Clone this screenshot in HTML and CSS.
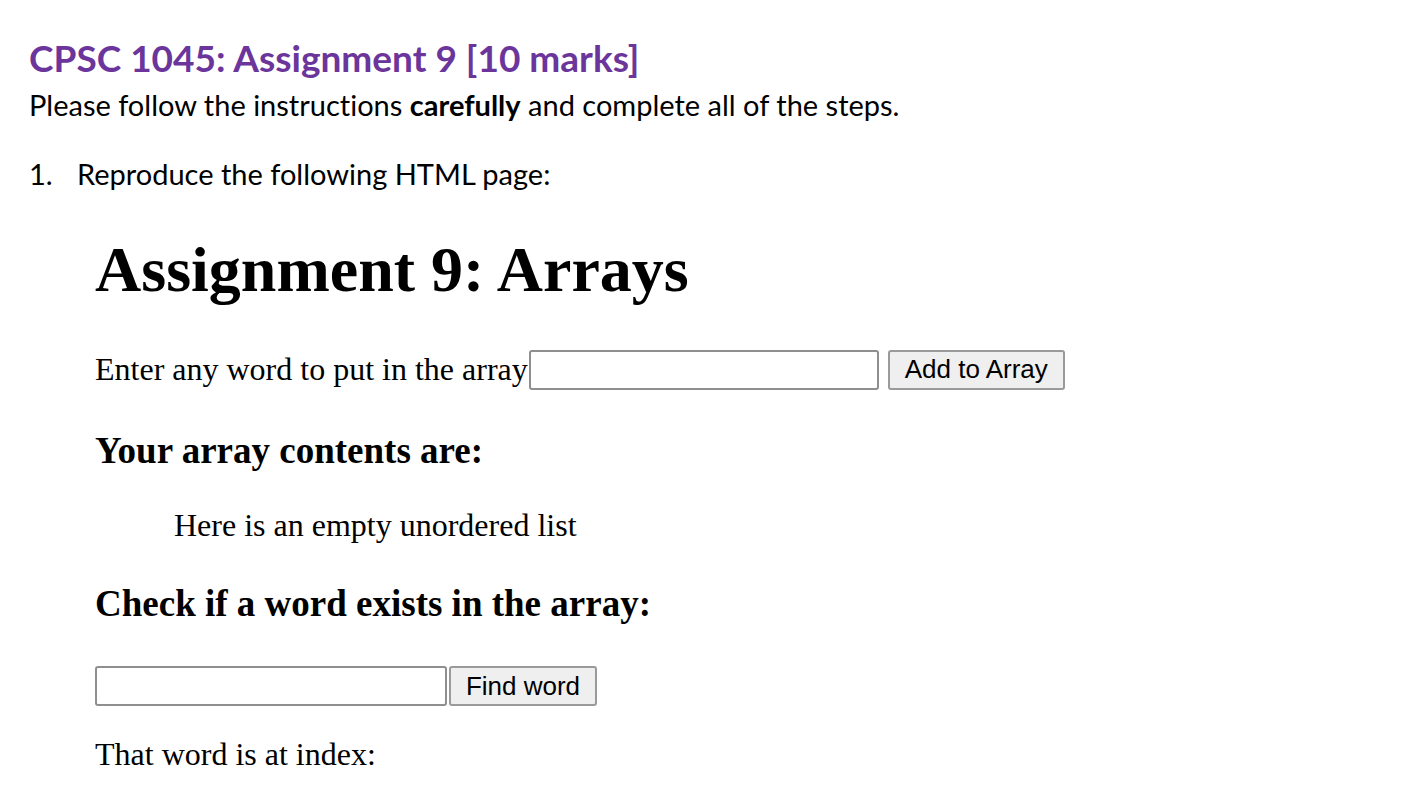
FILE: index.html
```html
<!DOCTYPE html>
<html lang="en">
<head>
    <meta charset="UTF-8">
    <title>CPSC 1045: Assignment 9</title>
    <link rel="stylesheet" href="styles.css">
</head>
<body>
    <div class="page">
        <h1 class="title">CPSC 1045: Assignment 9 [10 marks]</h1>
        <p class="intro">Please follow the instructions <strong>carefully</strong> and complete all of the steps.</p>

        <ol class="steps">
            <li>
                <span class="num">1.</span>
                <span>Reproduce the following HTML page:</span>
            </li>
        </ol>

        <div class="sample">
            <h1 class="sample-title">Assignment 9: Arrays</h1>

            <div class="row row-add">
                <span>Enter any word to put in the array</span><input type="text" class="field"><button class="btn btn-add">Add to Array</button>
            </div>

            <h3 class="sample-head">Your array contents are:</h3>
            <p class="empty-list">Here is an empty unordered list</p>

            <h3 class="sample-head head-find">Check if a word exists in the array:</h3>

            <div class="row row-find">
                <input type="text" class="field"><button class="btn btn-find">Find word</button>
            </div>

            <p class="result">That word is at index:</p>
        </div>
    </div>
</body>
</html>
```

FILE: styles.css
```css
body {
    margin: 0;
    background: #ffffff;
    color: #000000;
    font-family: Lato, "Open Sans", sans-serif;
    font-variant-ligatures: none;
}

.page {
    padding: 36px 29px 0 29px;
}

.title {
    margin: 0;
    font-size: 37px;
    line-height: 1.2;
    font-weight: 700;
    color: #6b359c;
}

.intro {
    margin: 8px 0 0 0;
    font-size: 29px;
    line-height: 1.2;
}

.steps {
    list-style: none;
    margin: 34px 0 0 0;
    padding: 0;
    font-size: 29px;
    line-height: 1.2;
}

.steps li {
    display: flex;
}

.num {
    width: 48px;
}

/* embedded screenshot of the target page */
.sample {
    margin: 41px 0 0 66px;
    font-family: "Liberation Serif", "Times New Roman", serif;
    font-size: 32px;
    line-height: 1.15;
}

.sample-title {
    margin: 0;
    font-size: 64px;
    line-height: 1.15;
    font-weight: 700;
}

.row {
    display: flex;
    align-items: center;
}

.row-add {
    margin-top: 43px;
}

.row-find {
    margin-top: 41px;
}

.field {
    width: 350px;
    height: 40px;
    box-sizing: border-box;
    margin: 0 0 0 1px;
    border: 2px solid #8f8f8f;
    border-radius: 3px;
    background: #ffffff;
}

.row .field:first-child {
    margin-left: 0;
    width: 352px;
}

.btn {
    height: 40px;
    box-sizing: border-box;
    border: 2px solid #9a9a9a;
    border-radius: 3px;
    background: #efefef;
    font-family: "Liberation Sans", Arial, sans-serif;
    font-size: 26px;
    color: #000000;
    padding: 0;
    white-space: nowrap;
}

.btn-add {
    margin-left: 9px;
    width: 177px;
}

.btn-find {
    margin-left: 2px;
    width: 148px;
}

.sample-head {
    margin: 40px 0 0 0;
    font-size: 37px;
    line-height: 1.15;
    font-weight: 700;
}

.head-find {
    margin-top: 39px;
}

.empty-list {
    margin: 35px 0 0 79px;
}

.result {
    margin: 30px 0 0 0;
}
```
